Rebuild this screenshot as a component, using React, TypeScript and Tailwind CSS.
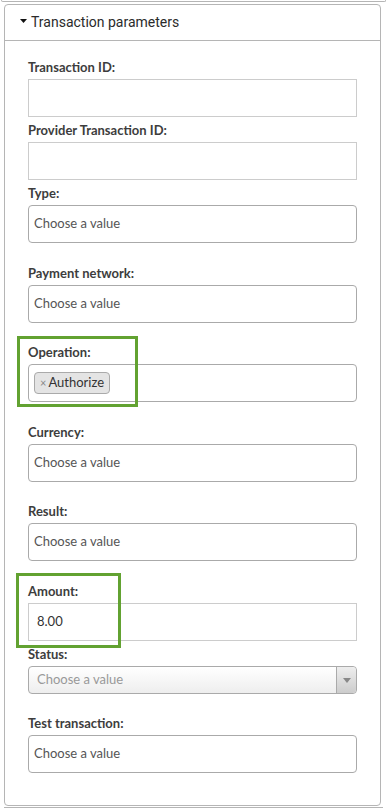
import React from 'react'

const font = { fontFamily: 'Lato, "Open Sans", sans-serif' }

type Field = {
  label: string
  kind: 'text' | 'select' | 'tag' | 'dropdown'
  value?: string
  highlight?: 'operation' | 'amount'
  tight?: boolean
}

const fields: Field[] = [
  { label: 'Transaction ID:', kind: 'text' },
  { label: 'Provider Transaction ID:', kind: 'text' },
  { label: 'Type:', kind: 'select' },
  { label: 'Payment network:', kind: 'select', tight: true },
  { label: 'Operation:', kind: 'tag', value: 'Authorize', highlight: 'operation' },
  { label: 'Currency:', kind: 'select', tight: true },
  { label: 'Result:', kind: 'select' },
  { label: 'Amount:', kind: 'text', value: '8.00', highlight: 'amount' },
  { label: 'Status:', kind: 'dropdown' },
  { label: 'Test transaction:', kind: 'select' }
]

function FieldRow({ f }: { f: Field }) {
  const gap = f.tight ? 'mb-[20px]' : 'mb-[21px]'
  return (
    <div className="relative">
      {/* green highlight frames */}
      {f.highlight === 'operation' && (
        <div className="absolute -left-[11px] -top-[7px] w-[121px] h-[71px] border-[3px] border-[#62a231] pointer-events-none z-10" />
      )}
      {f.highlight === 'amount' && (
        <div className="absolute -left-[12px] -top-[9px] w-[105px] h-[75px] border-[3px] border-[#62a231] pointer-events-none z-10" />
      )}

      <div className="h-[18px] leading-[18px] text-[13px] font-bold text-[#3d3d3d] mb-[3px]">
        {f.label}
      </div>

      {f.kind === 'text' && (
        <div className="h-[38px] border border-[#cccccc] bg-white mb-[4px] flex items-center px-[8px] text-[13px] text-[#333]">
          {f.value}
        </div>
      )}

      {f.kind === 'select' && (
        <div className={`h-[38px] border border-[#aaaaaa] rounded-[4px] bg-white ${gap} flex items-center px-[5px] text-[13px] text-[#555]`}>
          Choose a value
        </div>
      )}

      {f.kind === 'tag' && (
        <div className={`h-[38px] border border-[#aaaaaa] rounded-[4px] bg-white ${gap} flex items-center px-[5px]`}>
          <span className="h-[22px] flex items-center gap-[2px] px-[5px] rounded-[4px] border border-[#aaaaaa] bg-[#e4e4e4] text-[13px] text-[#333]">
            <span className="text-[#888] text-[11px]">×</span>
            {f.value}
          </span>
        </div>
      )}

      {f.kind === 'dropdown' && (
        <div className="h-[28px] border border-[#aaaaaa] rounded-[4px] bg-gradient-to-b from-white to-[#eeeeee] mb-[20px] flex items-stretch">
          <div className="flex-1 flex items-center px-[8px] text-[13px] text-[#999]">Choose a value</div>
          <div className="w-[20px] border-l border-[#aaaaaa] rounded-r-[4px] bg-gradient-to-b from-[#eeeeee] to-[#cccccc] flex items-center justify-center">
            <svg width="8" height="5" viewBox="0 0 8 5">
              <path d="M0 0 L8 0 L4 5 Z" fill="#888" />
            </svg>
          </div>
        </div>
      )}
    </div>
  )
}

export default function App() {
  return (
    <div className="w-[387px] h-[809px] bg-white overflow-hidden" style={font}>
      {/* end of previous panel */}
      <div className="h-[2px] mx-[1px] border-x border-b border-[#b5b5b5] rounded-b-[3px]" />

      {/* PANEL */}
      <div className="mt-[2px] ml-[4px] w-[377px] h-[802px] border border-[#b5b5b5] rounded-[4px] flex flex-col">
        {/* HEADER */}
        <div className="h-[36px] border-b border-[#b5b5b5] flex items-center pl-[15px] gap-[4px]">
          <svg width="7" height="4" viewBox="0 0 7 4" className="-mt-[4px]">
            <path d="M0 0 L7 0 L3.5 4 Z" fill="#111" />
          </svg>
          <span
            className="text-[14px] text-[#2b2b2b]"
            style={{ fontFamily: 'Roboto, "Noto Sans", sans-serif' }}
          >
            Transaction parameters
          </span>
        </div>

        {/* BODY */}
        <div className="pt-[17px] px-[23px]">
          {fields.map(f => (
            <FieldRow key={f.label} f={f} />
          ))}
        </div>
      </div>

      {/* start of next panel */}
      <div className="mt-[1px] mx-[4px] h-[2px] border-t border-[#b5b5b5]" />
    </div>
  )
}
